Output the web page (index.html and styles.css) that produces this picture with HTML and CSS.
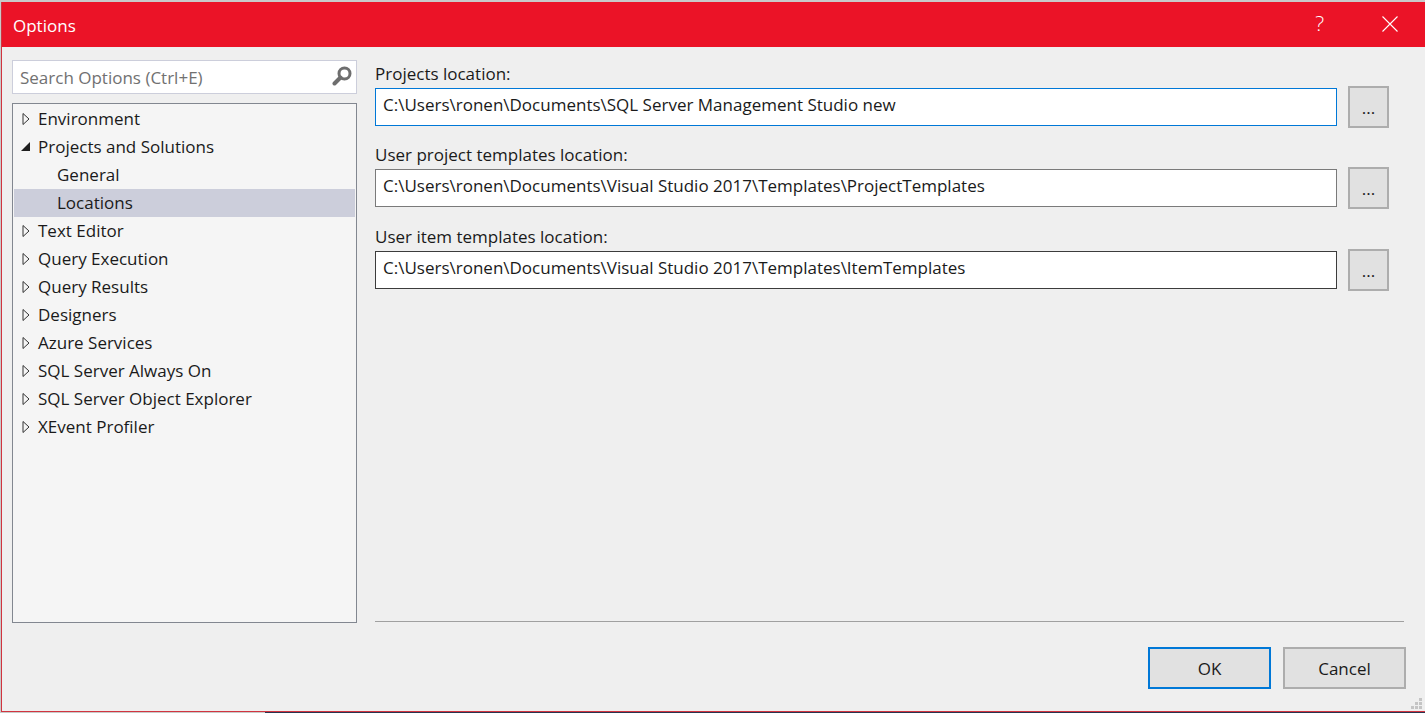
FILE: index.html
```html
<!DOCTYPE html>
<html lang="en">
<head>
<meta charset="utf-8">
<title>Options</title>
<link rel="stylesheet" href="styles.css">
</head>
<body>
<div class="window">
  <header class="titlebar">
    <span class="title">Options</span>
    <span class="help">?</span>
    <svg class="close" width="16" height="16" viewBox="0 0 16 16"><path d="M.5.5l15 15M15.500.5l-15 15" stroke="#fff" stroke-width="1.100" fill="none"/></svg>
  </header>
  <div class="content">
    <aside class="sidebar">
      <div class="search">
        <span class="search-text">Search Options (Ctrl+E)</span>
        <svg class="search-icon" width="20" height="20" viewBox="0 0 20 20"><circle cx="12.500" cy="7.500" r="5.500" fill="none" stroke="#6e6e6e" stroke-width="3"/><path d="M8.500 11.500L2.500 17.500" stroke="#6e6e6e" stroke-width="4" stroke-linecap="round"/></svg>
      </div>
      <ul class="tree">
        <li class="row"><svg class="arrow" width="8" height="14" viewBox="0 0 8 14"><path d="M1 1.500v11L7 7z" fill="none" stroke="#333" stroke-width="1"/></svg>Environment</li>
        <li class="row"><svg class="arrow arrow-open" width="10" height="14" viewBox="0 0 10 14"><path d="M0 12h9V3z" fill="#1e1e1e"/></svg>Projects and Solutions</li>
        <li class="row child">General</li>
        <li class="row child selected">Locations</li>
        <li class="row"><svg class="arrow" width="8" height="14" viewBox="0 0 8 14"><path d="M1 1.500v11L7 7z" fill="none" stroke="#333" stroke-width="1"/></svg>Text Editor</li>
        <li class="row"><svg class="arrow" width="8" height="14" viewBox="0 0 8 14"><path d="M1 1.500v11L7 7z" fill="none" stroke="#333" stroke-width="1"/></svg>Query Execution</li>
        <li class="row"><svg class="arrow" width="8" height="14" viewBox="0 0 8 14"><path d="M1 1.500v11L7 7z" fill="none" stroke="#333" stroke-width="1"/></svg>Query Results</li>
        <li class="row"><svg class="arrow" width="8" height="14" viewBox="0 0 8 14"><path d="M1 1.500v11L7 7z" fill="none" stroke="#333" stroke-width="1"/></svg>Designers</li>
        <li class="row"><svg class="arrow" width="8" height="14" viewBox="0 0 8 14"><path d="M1 1.500v11L7 7z" fill="none" stroke="#333" stroke-width="1"/></svg>Azure Services</li>
        <li class="row"><svg class="arrow" width="8" height="14" viewBox="0 0 8 14"><path d="M1 1.500v11L7 7z" fill="none" stroke="#333" stroke-width="1"/></svg>SQL Server Always On</li>
        <li class="row"><svg class="arrow" width="8" height="14" viewBox="0 0 8 14"><path d="M1 1.500v11L7 7z" fill="none" stroke="#333" stroke-width="1"/></svg>SQL Server Object Explorer</li>
        <li class="row"><svg class="arrow" width="8" height="14" viewBox="0 0 8 14"><path d="M1 1.500v11L7 7z" fill="none" stroke="#333" stroke-width="1"/></svg>XEvent Profiler</li>
      </ul>
    </aside>
    <main class="panel">
      <section class="field">
        <label class="label">Projects location:</label>
        <div class="field-row">
          <div class="input focused">C:\Users\ronen\Documents\SQL Server Management Studio new</div>
          <button class="browse">...</button>
        </div>
      </section>
      <section class="field">
        <label class="label">User project templates location:</label>
        <div class="field-row">
          <div class="input">C:\Users\ronen\Documents\Visual Studio 2017\Templates\ProjectTemplates</div>
          <button class="browse">...</button>
        </div>
      </section>
      <section class="field">
        <label class="label">User item templates location:</label>
        <div class="field-row">
          <div class="input dark">C:\Users\ronen\Documents\Visual Studio 2017\Templates\ItemTemplates</div>
          <button class="browse">...</button>
        </div>
      </section>
      <div class="spacer"></div>
      <hr class="divider">
      <footer class="actions">
        <button class="action default">OK</button>
        <button class="action">Cancel</button>
      </footer>
    </main>
  </div>
  <svg class="grip" width="11" height="11" viewBox="0 0 11 11" fill="#c4c4c4"><rect x="8" y="0" width="3" height="3"/><rect x="4" y="4" width="3" height="3"/><rect x="8" y="4" width="3" height="3"/><rect x="0" y="8" width="3" height="3"/><rect x="4" y="8" width="3" height="3"/><rect x="8" y="8" width="3" height="3"/></svg>
</div>
<div class="under"></div>
</body>
</html>
```
FILE: styles.css
```css
* { box-sizing: border-box; }
html, body { margin: 0; height: 100%; }
body {
  overflow: hidden;
  background: #c9c9c9;
  padding: 2px 0 0 1px;
  font-family: "Open Sans", "Noto Sans", sans-serif;
  font-size: 17px;
  color: #1a1a1a;
}
.window {
  position: relative;
  height: 710px;
  background: #efefef;
  border-left: 1px solid #d1343f;
  border-bottom: 1px solid #d1343f;
  display: flex;
  flex-direction: column;
}
.titlebar {
  height: 45px;
  flex: none;
  background: #eb1327;
  color: #fff;
  display: flex;
  align-items: center;
  padding-left: 11px;
}
.title { flex: 1; font-size: 17px; padding-top: 2px; }
.help { font-size: 21px; margin-right: 58px; margin-top: -3px; font-weight: 300; }
.close { margin-right: 27px; margin-top: -1px; }
.content {
  flex: 1;
  display: flex;
  min-height: 0;
}
.sidebar {
  width: 345px;
  margin-left: 10px;
  padding-top: 13px;
  flex: none;
}
.search {
  height: 34px;
  background: #fff;
  border: 1px solid #ccceDB;
  display: flex;
  align-items: center;
  justify-content: space-between;
  padding: 0 4px 0 7px;
  color: #717171;
}
.search-text { padding-top: 1px; }
.search-icon { margin-top: -2px; }
.tree {
  list-style: none;
  margin: 9px 0 0;
  height: 520px;
  padding: 1px;
  background: #f5f5f5;
  border: 1px solid #828790;
}
.row {
  height: 28px;
  display: flex;
  align-items: center;
  padding: 0 0 2px 24px;
  position: relative;
  white-space: nowrap;
}
.row.child { padding-left: 43px; }
.row.selected { background: #ccceDB; }
.arrow { position: absolute; left: 8px; top: 7px; }
.arrow-open { left: 7px; top: 6px; }
.panel {
  flex: 1;
  margin-left: 18px;
  padding-top: 15px;
  display: flex;
  flex-direction: column;
  min-width: 0;
}
.field { margin-bottom: 15px; }
.field + .field { margin-bottom: 16px; }
.label { display: block; height: 24px; line-height: 24px; }
.field-row {
  display: flex;
  align-items: center;
  gap: 11px;
  height: 42px;
}
.input {
  width: 962px;
  height: 38px;
  background: #fff;
  border: 1px solid #7a7a7a;
  padding: 0 0 6px 7px;
  display: flex;
  align-items: center;
  white-space: nowrap;
}
.input.focused { border-color: #0078d7; }
.input.dark { border-color: #3c3c3c; }
.browse {
  width: 41px;
  height: 42px;
  background: #e1e1e1;
  border: 2px solid #adadad;
  padding: 0;
  font: inherit;
  color: #1a1a1a;
}
.spacer { flex: 1; }
.divider {
  margin: 0 21px 0 0;
  border: 0;
  border-top: 1px solid #a0a0a0;
  height: 1px;
}
.actions {
  display: flex;
  justify-content: flex-end;
  gap: 12px;
  margin: 25px 19px 22px 0;
}
.action {
  width: 123px;
  height: 42px;
  background: #e1e1e1;
  border: 2px solid #adadad;
  font: inherit;
  color: #1a1a1a;
  padding: 0;
}
.action.default { border-color: #0078d7; }
.grip { position: absolute; right: 3px; bottom: 2px; }
.under {
  height: 1px;
  margin-left: 264px;
  background: #2a3350;
}
```
